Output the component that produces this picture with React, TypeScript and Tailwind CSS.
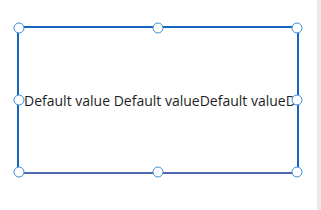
export default function App() {
  const handles = [
    "left-0 top-0",
    "left-1/2 top-0",
    "left-full top-0",
    "left-0 top-1/2",
    "left-full top-1/2",
    "left-0 top-full",
    "left-1/2 top-full",
    "left-full top-full",
  ];

  return (
    <div className="flex h-[210px] w-[321px] bg-white font-['Open_Sans',sans-serif]">
      <div className="flex-1 pl-[17px] pt-[26px]">
        <div className="relative h-[148px] w-[282px] border-2 border-[#1466c0] border-b-[#4f68b0]">
          <div className="flex h-full items-center overflow-hidden whitespace-nowrap pl-[5px] text-[14px] text-[#1e1e1e]">
            Default value Default valueDefault valueDefault value
          </div>
          {handles.map((h) => (
            <span
              key={h}
              className={`absolute ${h} h-[11px] w-[11px] -translate-x-1/2 -translate-y-1/2 rounded-full border-[1.5px] border-[#3d8fdc] bg-white`}
            />
          ))}
        </div>
      </div>
      <div className="w-[4px] bg-[#ebebeb]" />
    </div>
  );
}
